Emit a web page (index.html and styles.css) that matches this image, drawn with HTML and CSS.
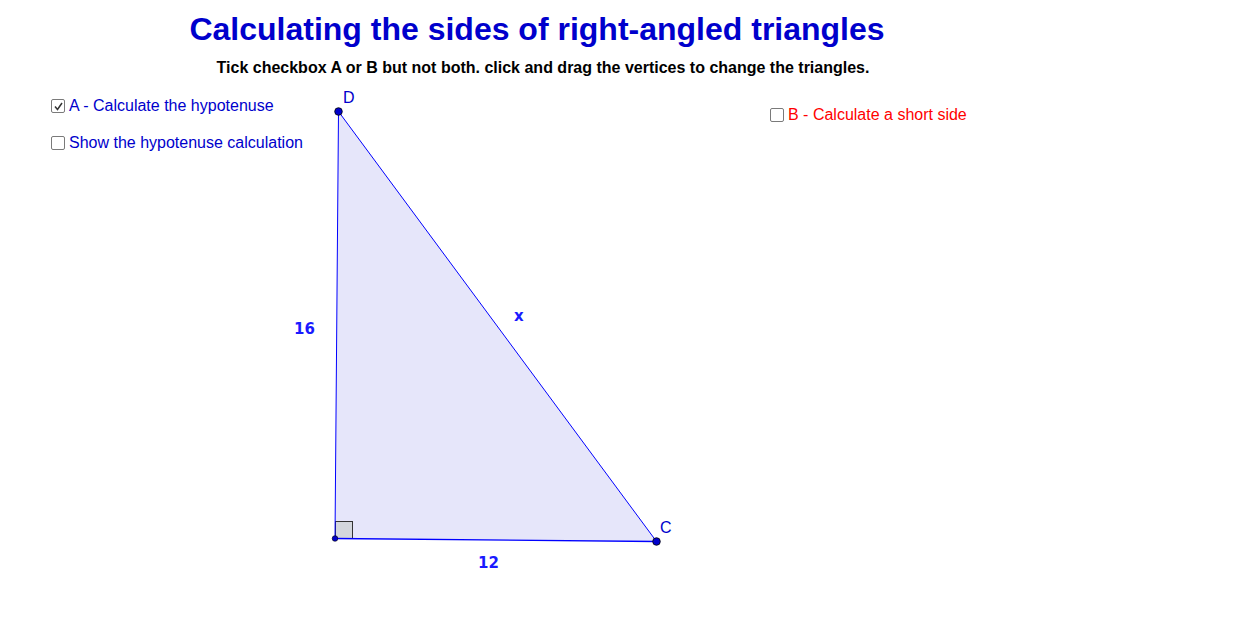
FILE: index.html
```html
<!DOCTYPE html>
<html>
<head>
<meta charset="utf-8">
<link rel="stylesheet" href="styles.css">
</head>
<body>
<div class="applet">
  <header class="head">
    <h1 class="title">Calculating the sides of right-angled triangles</h1>
    <p class="subtitle">Tick checkbox A or B but not both. click and drag the vertices to change the triangles.</p>
  </header>
  <svg class="canvas" width="1251" height="638" viewBox="0 0 1251 638">
    <polygon points="338.5,111.5 335,538.5 656.5,541.5" fill="#e6e6fa" stroke="none"/>
    <rect x="335.5" y="521.5" width="17" height="17" fill="#d3d6dc" stroke="#333" stroke-width="1"/>
    <line x1="338.5" y1="111.5" x2="335" y2="538.5" stroke="#0000ff" stroke-width="1"/>
    <line x1="335" y1="538.5" x2="656.5" y2="541.5" stroke="#0000ff" stroke-width="1.3"/>
    <line x1="338.5" y1="111.5" x2="656.5" y2="541.5" stroke="#0000ff" stroke-width="1"/>
    <circle cx="338.5" cy="111.5" r="3.8" fill="#0000cc" stroke="#000" stroke-width="0.8"/>
    <circle cx="656.5" cy="541.5" r="3.8" fill="#0000cc" stroke="#000" stroke-width="0.8"/>
    <circle cx="335" cy="538.5" r="2.8" fill="#0000cc" stroke="#000" stroke-width="0.6"/>
    <text x="343" y="103" class="vlabel">D</text>
    <text x="660" y="533" class="vlabel">C</text>
    <text x="294" y="334" class="slabel">16</text>
    <text x="514" y="321" class="slabel">x</text>
    <text x="478" y="568" class="slabel">12</text>
  </svg>
  <div class="widget w-a">
    <span class="box checked"><svg width="11" height="11" viewBox="0 0 11 11"><path d="M2 5.5 L4.5 8.5 L9 2" fill="none" stroke="#333" stroke-width="1.5"/></svg></span>
    <span class="lbl blue">A - Calculate the hypotenuse</span>
  </div>
  <div class="widget w-show">
    <span class="box"></span>
    <span class="lbl blue">Show the hypotenuse calculation</span>
  </div>
  <div class="widget w-b">
    <span class="box"></span>
    <span class="lbl red">B - Calculate a short side</span>
  </div>
</div>
</body>
</html>
```
FILE: styles.css
```css
html, body {
  margin: 0;
  padding: 0;
  background: #fff;
}
.applet {
  position: relative;
  width: 1251px;
  height: 638px;
  overflow: hidden;
  font-family: "Liberation Sans", Arial, sans-serif;
}
.head {
  position: relative;
  z-index: 1;
  width: 1074px;
  display: flex;
  flex-direction: column;
  align-items: center;
  padding-top: 11px;
}
.title {
  margin: 0;
  font-size: 32px;
  font-weight: bold;
  color: #0000cc;
  line-height: 36px;
}
.subtitle {
  margin: 12px 0 0 0;
  padding-left: 12px;
  font-size: 16px;
  font-weight: bold;
  color: #000;
  line-height: 18px;
}
.canvas {
  position: absolute;
  left: 0;
  top: 0;
}
.vlabel {
  font-family: "Liberation Sans", Arial, sans-serif;
  font-size: 16px;
  fill: #0000cc;
}
.slabel {
  font-family: "DejaVu Sans", sans-serif;
  font-size: 15px;
  font-weight: bold;
  fill: #1a1aff;
}
.widget {
  position: absolute;
  display: flex;
  align-items: center;
  gap: 4px;
}
.w-a { left: 51px; top: 97px; }
.w-show { left: 51px; top: 134px; }
.w-b { left: 770px; top: 106px; }
.box {
  width: 12px;
  height: 12px;
  border: 1px solid #7a7a7a;
  border-radius: 2px;
  background: #fff;
  display: flex;
  align-items: center;
  justify-content: center;
  box-sizing: content-box;
}
.lbl {
  font-size: 16px;
  line-height: 18px;
}
.blue { color: #0000cc; }
.red { color: #ff0000; }
```
